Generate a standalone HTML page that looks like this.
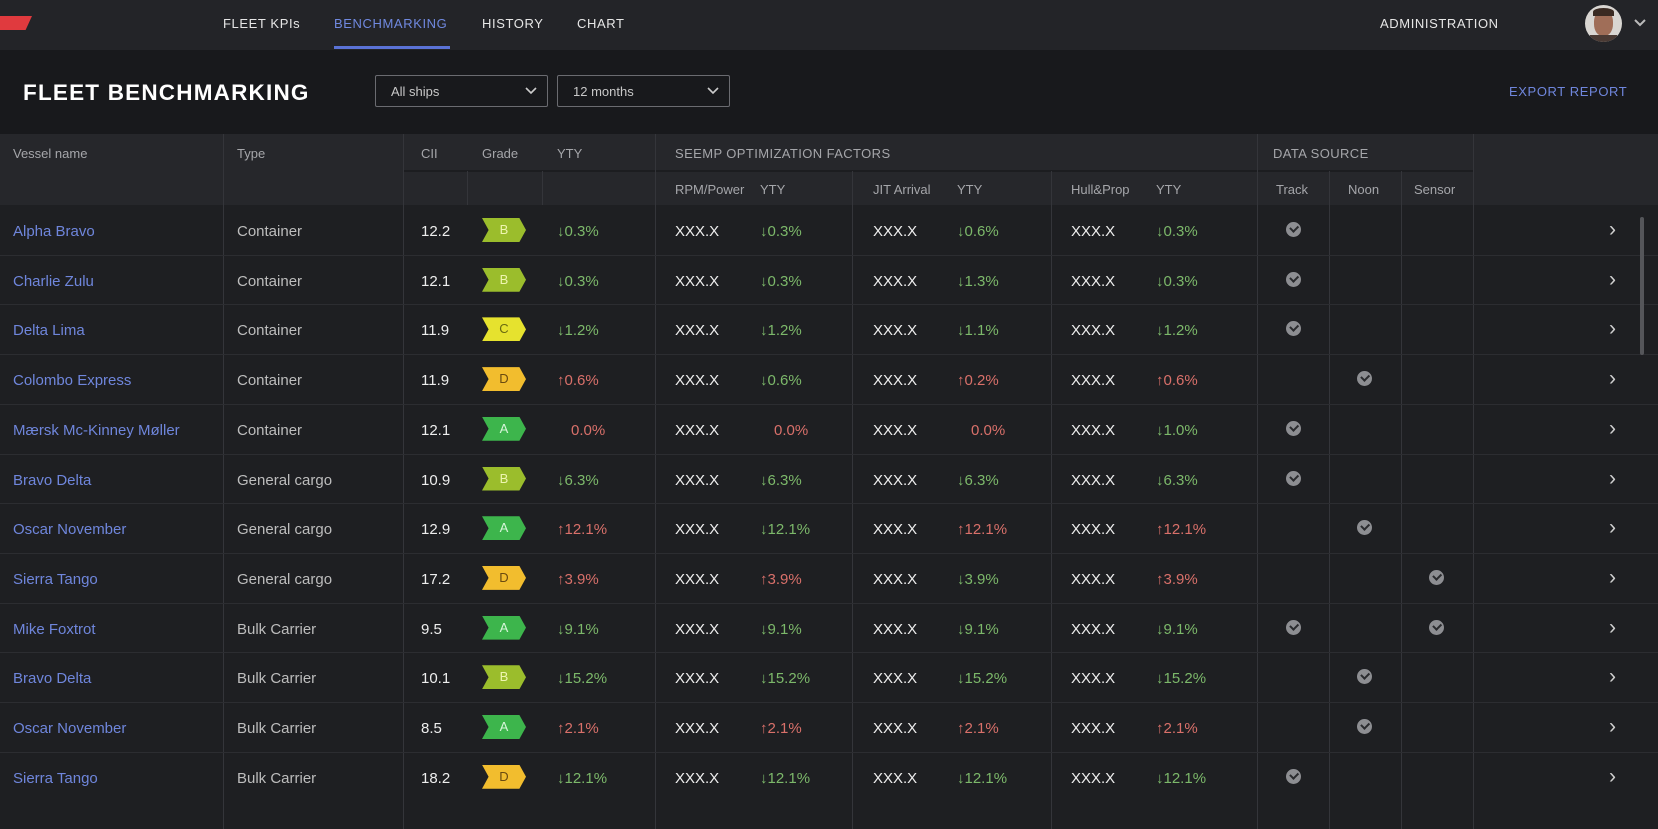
<!DOCTYPE html>
<html><head><meta charset="utf-8"><style>
*{box-sizing:border-box;margin:0;padding:0}
body{width:1658px;height:829px;overflow:hidden;background:#1e1f22;font-family:"Liberation Sans",sans-serif;color:#d8d8d8;position:relative}
.nav{position:absolute;left:0;top:0;width:1658px;height:50px;background:#232428}
.nav a{position:absolute;top:16px;font-size:13px;letter-spacing:.6px;color:#e6e6e6}
.hdr{position:absolute;left:0;top:50px;width:1658px;height:84px;background:#18191c}
.title{position:absolute;left:23px;top:80px;font-size:22.5px;font-weight:bold;letter-spacing:1.2px;color:#fff}
.dd{position:absolute;top:75px;height:32px;border:1px solid #6a6b70;border-radius:2px;font-size:13px;color:#c8c8c8;padding:8px 15px}
.dd svg{position:absolute;right:10px;top:11px}
.th{position:absolute;background:#26272b}
.l{position:absolute;background:#34353a}
.c{position:absolute;font-size:15px;white-space:nowrap}
.h{position:absolute;font-size:13px;color:#a5a6aa;white-space:nowrap}
.g{color:#7cb86a}.r{color:#d9706a}.b{color:#6f86dc}.w{color:#eeeeee}.t{color:#bdbdbd}
.bd{position:absolute;width:44px;height:24px;font-size:13px;text-align:center;line-height:24px;clip-path:polygon(0 0,85% 0,100% 50%,85% 100%,0 100%,15% 50%)}
.ck{position:absolute;width:15px;height:15px;border-radius:50%;background:#8d8e92}
.ck:after{content:"";position:absolute;left:4px;top:3px;width:6px;height:3.5px;border-left:2px solid #2a2b2e;border-bottom:2px solid #2a2b2e;transform:rotate(-45deg)}
.chev{position:absolute;font-size:21px;color:#cfcfcf}
</style></head><body>
<div class="nav">
<div style="position:absolute;left:0;top:16px;width:32px;height:14px;background:#e03a3e;clip-path:polygon(0 0,100% 0,80% 100%,0 100%)"></div>
<a style="left:223px">FLEET KPIs</a>
<a style="left:334px;color:#7089e0">BENCHMARKING</a>
<div style="position:absolute;left:334px;top:46px;width:116px;height:3px;background:#5a72d6"></div>
<a style="left:482px">HISTORY</a>
<a style="left:577px">CHART</a>
<a style="left:1380px">ADMINISTRATION</a>
<div style="position:absolute;left:1585px;top:5px;width:37px;height:37px;border-radius:50%;background:#d9d6d2;overflow:hidden"><div style="position:absolute;left:9px;top:5px;width:19px;height:26px;border-radius:45%;background:#a06e58"></div><div style="position:absolute;left:8px;top:3px;width:21px;height:8px;border-radius:50% 50% 0 0;background:#3a2a22"></div><div style="position:absolute;left:5px;top:30px;width:27px;height:10px;background:#4a3a34"></div></div>
<svg style="position:absolute;left:1634px;top:19px" width="12" height="8"><path d="M1 1 L6 6 L11 1" stroke="#bbb" stroke-width="2" fill="none"/></svg>
</div>
<div class="hdr"></div>
<div class="title">FLEET BENCHMARKING</div>
<div class="dd" style="left:375px;width:173px">All ships<svg width="12" height="8"><path d="M1 1 L6 6 L11 1" stroke="#ccc" stroke-width="1.6" fill="none"/></svg></div>
<div class="dd" style="left:557px;width:173px">12 months<svg width="12" height="8"><path d="M1 1 L6 6 L11 1" stroke="#ccc" stroke-width="1.6" fill="none"/></svg></div>
<div style="position:absolute;left:1509px;top:84px;font-size:13px;letter-spacing:.6px;color:#6f86dc">EXPORT REPORT</div>

<div class="th" style="left:0;top:134px;width:1658px;height:71px"></div>
<div style="position:absolute;left:403px;top:170px;width:1070px;height:2px;background:#1c1d20"></div>
<div id="lines"></div>
<div class="h" style="left:13px;top:146px">Vessel name</div>
<div class="h" style="left:237px;top:146px">Type</div>
<div class="h" style="left:421px;top:146px">CII</div>
<div class="h" style="left:482px;top:146px">Grade</div>
<div class="h" style="left:557px;top:146px">YTY</div>
<div class="h" style="left:675px;top:146px;letter-spacing:.4px">SEEMP OPTIMIZATION FACTORS</div>
<div class="h" style="left:1273px;top:146px;letter-spacing:.4px">DATA SOURCE</div>
<div class="h" style="left:675px;top:182px">RPM/Power</div><div class="h" style="left:760px;top:182px">YTY</div>
<div class="h" style="left:873px;top:182px">JIT Arrival</div><div class="h" style="left:957px;top:182px">YTY</div>
<div class="h" style="left:1071px;top:182px">Hull&amp;Prop</div><div class="h" style="left:1156px;top:182px">YTY</div>
<div class="h" style="left:1276px;top:182px">Track</div><div class="h" style="left:1348px;top:182px">Noon</div><div class="h" style="left:1414px;top:182px">Sensor</div>
<div id="rows"></div>
<div style="position:absolute;left:1640px;top:217px;width:4px;height:138px;border-radius:2px;background:#55565a"></div>
<script>
var L=document.getElementById('lines'),s='';
[[223,134,829],[403,134,829],[467,171,205],[542,171,205],[655,134,829],[852,171,829],[1051,171,829],[1257,134,829],[1329,171,829],[1401,171,829],[1473,134,829]].forEach(function(a){s+='<div class="l" style="left:'+a[0]+'px;top:'+a[1]+'px;width:1px;height:'+(a[2]-a[1])+'px"></div>';});
L.innerHTML=s;
var D=[["Alpha Bravo","Container","12.2","B","d0.3","d0.3","d0.6","d0.3",1],
["Charlie Zulu","Container","12.1","B","d0.3","d0.3","d1.3","d0.3",1],
["Delta Lima","Container","11.9","C","d1.2","d1.2","d1.1","d1.2",1],
["Colombo Express","Container","11.9","D","u0.6","d0.6","u0.2","u0.6",2],
["Mærsk Mc-Kinney Møller","Container","12.1","A","z0.0","z0.0","z0.0","d1.0",1],
["Bravo Delta","General cargo","10.9","B","d6.3","d6.3","d6.3","d6.3",1],
["Oscar November","General cargo","12.9","A","u12.1","d12.1","u12.1","u12.1",2],
["Sierra Tango","General cargo","17.2","D","u3.9","u3.9","d3.9","u3.9",3],
["Mike Foxtrot","Bulk Carrier","9.5","A","d9.1","d9.1","d9.1","d9.1",13],
["Bravo Delta","Bulk Carrier","10.1","B","d15.2","d15.2","d15.2","d15.2",2],
["Oscar November","Bulk Carrier","8.5","A","u2.1","u2.1","u2.1","u2.1",2],
["Sierra Tango","Bulk Carrier","18.2","D","d12.1","d12.1","d12.1","d12.1",1]];
var col={A:["#3db54c","#d8f5da"],B:["#9bbd2c","#eef5b0"],C:["#e6e22e","#6a6a10"],D:["#f2bd2e","#6a4a10"]};
function pct(v,x,y){var k=v[0],n=v.slice(1)+'%';var cls=k=='d'?'g':'r';var t=k=='d'?'↓'+n:k=='u'?'↑'+n:n;
var off=k=='z'?14:0;return '<div class="c '+cls+'" style="left:'+(x+off)+'px;top:'+y+'px">'+t+'</div>';}
var R='';
D.forEach(function(d,i){var top=205+i*49.7,y=top+18,cy=top+25;
if(i>0)R+='<div style="position:absolute;left:0;top:'+top+'px;width:1658px;height:1px;background:#2c2d31"></div>';
R+='<div class="c b" style="left:13px;top:'+y+'px">'+d[0]+'</div>';
R+='<div class="c t" style="left:237px;top:'+y+'px">'+d[1]+'</div>';
R+='<div class="c w" style="left:421px;top:'+y+'px">'+d[2]+'</div>';
R+='<div class="bd" style="left:482px;top:'+(cy-12)+'px;background:'+col[d[3]][0]+';color:'+col[d[3]][1]+'">'+d[3]+'</div>';
R+=pct(d[4],557,y);
R+='<div class="c w" style="left:675px;top:'+y+'px">XXX.X</div>'+pct(d[5],760,y);
R+='<div class="c w" style="left:873px;top:'+y+'px">XXX.X</div>'+pct(d[6],957,y);
R+='<div class="c w" style="left:1071px;top:'+y+'px">XXX.X</div>'+pct(d[7],1156,y);
var c=String(d[8]);[[1,1286],[2,1357],[3,1429]].forEach(function(p){if(c.indexOf(p[0])>=0)R+='<div class="ck" style="left:'+p[1]+'px;top:'+(cy-8)+'px"></div>';});
R+='<div class="chev" style="left:1609px;top:'+(y-5)+'px">›</div>';
});
document.getElementById('rows').innerHTML=R;
</script>
</body></html>
